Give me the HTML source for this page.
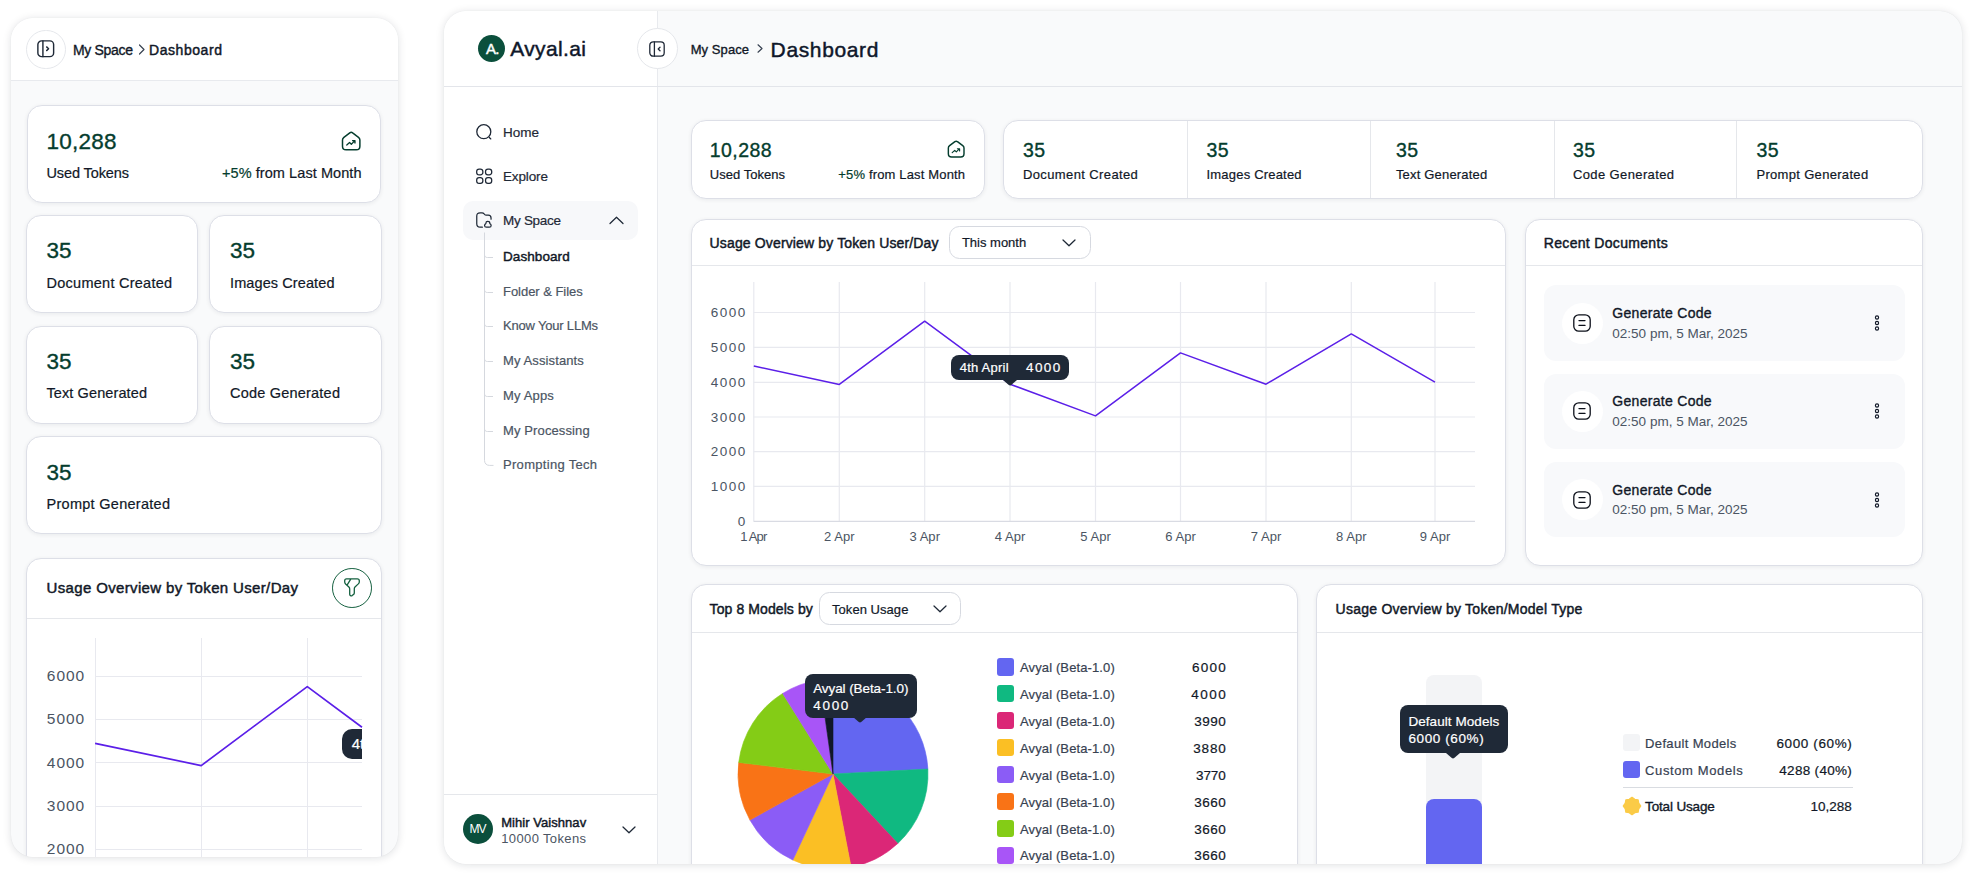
<!DOCTYPE html>
<html lang="en">
<head>
<meta charset="utf-8">
<title>Avyal.ai Dashboard</title>
<style>
*{box-sizing:border-box;margin:0;padding:0}
html,body{width:1972px;height:875px;overflow:hidden;background:#fff}
body{font-family:"Liberation Sans",sans-serif;color:#111827;position:relative}
.abs{position:absolute}
.t{position:absolute;white-space:nowrap;line-height:20px;margin-top:-10px;font-size:14px;color:#111827;-webkit-text-stroke:.2px}
.r{transform:translateX(-100%)}
.c{transform:translateX(-50%)}
.m{font-weight:bold}
.g{color:#053d2e}
.gr{color:#4b5563;-webkit-text-stroke:0}
.nv{color:#1f2937}
.sb{color:#4b5563}
.md{-webkit-text-stroke:.35px}
.sm{-webkit-text-stroke:.45px}
.panel{position:absolute;background:#f9fafb;border-radius:22px;overflow:hidden;box-shadow:0 0 1px rgba(17,24,39,.10),0 1px 9px rgba(17,24,39,.13)}
.card{position:absolute;background:#fff;border:1px solid #dddfe7;border-radius:15px;box-shadow:0 1px 4px rgba(17,24,39,.07)}
.hl{position:absolute;height:1px;background:#e5e7eb}
.vl{position:absolute;width:1px;background:#e5e7eb}
.circ{position:absolute;border-radius:50%}
svg{position:absolute;overflow:visible}
.tip{position:absolute;background:#1f2937;border-radius:8px}
.sq{position:absolute;width:17px;height:17px;border-radius:3px}
.sel{position:absolute;background:#fff;border:1px solid #d6d9e0;border-radius:10.500px}
</style>
</head>
<body>
<div class="panel" style="left:11px;top:18px;width:386.5px;height:839px">
  <div class="abs" style="left:0px;top:0px;width:386.5px;height:62.5px;background:#fff;border-bottom:1px solid #e8eaee"></div>
  <div class="circ" style="left:15.4px;top:11.5px;width:39.2px;height:39.2px;border:1px solid #e5e7eb;background:#fff"></div>
  <svg style="left:26.2px;top:22.4px" width="17.5" height="17.5" viewBox="0 0 16 16" fill="none" stroke="#1f2937" stroke-width="1.300" stroke-linecap="round" stroke-linejoin="round"><rect x="0.800" y="0.800" width="14.400" height="14.400" rx="3.400"/><path d="M5.400 0.800v14.400M8.800 6.300l1.800 1.700-1.800 1.700"/></svg>
  <div class="t md" style="left:62px;top:31.7px;font-size:14px;letter-spacing:-0.32px">My Space</div>
  <svg style="left:127px;top:25.5px" width="8" height="11" viewBox="0 0 8 11" fill="none" stroke="#374151" stroke-width="1.200" stroke-linecap="round" stroke-linejoin="round"><path d="M1.500 1l4.500 4.500L1.500 10"/></svg>
  <div class="t sm" style="left:138px;top:31.7px;font-size:14px;letter-spacing:0.56px">Dashboard</div>
  <div class="card" style="left:15.5px;top:87px;width:354.5px;height:98px"></div>
  <div class="t g md" style="left:35.5px;top:123.5px;font-size:22.5px;letter-spacing:0.23px">10,288</div>
  <div class="t" style="left:35.5px;top:155px;font-size:14.5px;letter-spacing:-0.11px">Used Tokens</div>
  <div class="t r" style="left:350.57px;top:155px;font-size:14.5px;letter-spacing:0.07px"><span class="g">+5%</span> from Last Month</div>
  <svg style="left:330.2px;top:112.5px" width="20" height="20" viewBox="0 0 18 18" fill="none" stroke="#053d2e" stroke-width="1.350" stroke-linecap="round" stroke-linejoin="round"><path d="M7.900 1.700 2.600 5.700C1.800 6.300 1.350 7 1.350 8v5.700c0 2 1.300 3.250 3.250 3.250h9.150c2 0 3.250-1.300 3.250-3.250V8c0-1-.45-1.700-1.250-2.300L10.450 1.700C9.700 1.100 8.700 1.100 7.900 1.700z"/><path stroke-width="1.150" d="M5.200 12.600l2.500-2.300 1.600 1.600 3-3M10.400 8.700h2.200v2.200"/></svg>
  <div class="card" style="left:15px;top:197.3px;width:171.5px;height:98px"></div>
  <div class="t g md" style="left:35.5px;top:233.3px;font-size:22.5px;letter-spacing:-0.03px">35</div>
  <div class="t" style="left:35.5px;top:264.8px;font-size:14.5px;letter-spacing:0.26px">Document Created</div>
  <div class="card" style="left:198px;top:197.3px;width:172.5px;height:98px"></div>
  <div class="t g md" style="left:219px;top:233.3px;font-size:22.5px;letter-spacing:-0.03px">35</div>
  <div class="t" style="left:219px;top:264.8px;font-size:14.5px;letter-spacing:0.1px">Images Created</div>
  <div class="card" style="left:15px;top:307.6px;width:171.5px;height:98px"></div>
  <div class="t g md" style="left:35.5px;top:343.6px;font-size:22.5px;letter-spacing:-0.03px">35</div>
  <div class="t" style="left:35.5px;top:375.1px;font-size:14.5px;letter-spacing:0.1px">Text Generated</div>
  <div class="card" style="left:198px;top:307.6px;width:172.5px;height:98px"></div>
  <div class="t g md" style="left:219px;top:343.6px;font-size:22.5px;letter-spacing:-0.03px">35</div>
  <div class="t" style="left:219px;top:375.1px;font-size:14.5px;letter-spacing:0.21px">Code Generated</div>
  <div class="card" style="left:15px;top:418px;width:355.5px;height:98px"></div>
  <div class="t g md" style="left:35.5px;top:454.8px;font-size:22.5px;letter-spacing:-0.03px">35</div>
  <div class="t" style="left:35.5px;top:485.5px;font-size:14.5px;letter-spacing:0.28px">Prompt Generated</div>
  <div class="card" style="left:15px;top:540px;width:355.5px;height:340px"></div>
  <div class="hl" style="left:16px;top:599.5px;width:353.5px;height:1px"></div>
  <div class="t sm" style="left:35.5px;top:570px;font-size:15px;letter-spacing:0.35px">Usage Overview by Token User/Day</div>
  <div class="circ" style="left:321.3px;top:549.8px;width:39.8px;height:39.8px;border:1.400px solid #14603f"></div>
  <svg style="left:333.2px;top:560.4px" width="16" height="19" viewBox="0 0 16 19" fill="none" stroke="#14603f" stroke-width="1.300" stroke-linecap="round" stroke-linejoin="round"><path d="M2.500.8H13.300c1.300 0 2 .8 2 1.900v1.200c0 .8-.4 1.400-1 2L11 9c-.5.500-.7 1-.7 1.700V15c0 .7-.3 1.200-.9 1.600l-1.300 1c-1 .7-2.400 0-2.400-1.300V11c0-.8-.3-1.500-.8-2L1.600 6C1 5.400.7 4.800.7 4V2.700C.7 1.600 1.400.8 2.500.8zM6.900.9 3.200 6.800"/></svg>
  <svg style="left:0px;top:0px" width="386.5" height="839" viewBox="11 18 386.5 839" ><g stroke="#e8e9ef" stroke-width="1"><path d="M95.5 638V860M201.5 638V860M307.5 638V860"/><path d="M95 676.5H362M95 719.5H362M95 762.5H362M95 806.5H362M95 849.5H362"/></g><path d="M95.100 743.300 201.200 765.600 307.300 686.600 362 727.300" stroke="#5b1fe8" stroke-width="1.700" stroke-linejoin="round" fill="none"/></svg>
  <div class="t gr" style="left:35.8px;top:657.7px;font-size:15.5px;letter-spacing:0.97px">6000</div>
  <div class="t gr" style="left:35.8px;top:700.9px;font-size:15.5px;letter-spacing:0.97px">5000</div>
  <div class="t gr" style="left:35.8px;top:744.5px;font-size:15.5px;letter-spacing:0.97px">4000</div>
  <div class="t gr" style="left:35.8px;top:787.7px;font-size:15.5px;letter-spacing:0.97px">3000</div>
  <div class="t gr" style="left:35.8px;top:830.8px;font-size:15.5px;letter-spacing:0.97px">2000</div>
  <div class="abs" style="left:330.6px;top:710.7px;width:20.400px;height:30.600px;overflow:hidden"><div class="tip" style="left:0;top:0;width:150px;height:30.600px;border-radius:10px"><div class="t" style="left:10.200px;top:15.500px;font-size:15px;color:#fff">4th April &nbsp; 4000</div></div></div>
</div>
<div class="panel" style="left:444px;top:11px;width:1518px;height:853px">
  <div class="abs" style="left:0px;top:0px;width:213px;height:853px;background:#fff"></div>
  <div class="vl" style="left:213px;top:0px;width:1px;height:853px;background:#e8eaee"></div>
  <div class="hl" style="left:0px;top:75px;width:1518px;height:1px;background:#e3e5ea"></div>
  <div class="hl" style="left:0px;top:783px;width:213px;height:1px"></div>
  <div class="circ" style="left:33.7px;top:23.8px;width:27.2px;height:27.2px;background:#0b4f3c"></div>
  <div class="t sm" style="left:42px;top:37.6px;font-size:15px;letter-spacing:-0.79px;color:#fff">A.</div>
  <div class="t sm" style="left:66.2px;top:37.5px;font-size:21px;letter-spacing:0.38px;color:#0f172a">Avyal.ai</div>
  <svg style="left:31.2px;top:112px" width="19" height="19" viewBox="0 0 19 19" fill="none" stroke="#1f2937" stroke-width="1.300" stroke-linecap="round" stroke-linejoin="round"><circle cx="8.800" cy="8.700" r="7"/><path d="M14.300 14.500l1.500 1.400"/></svg>
  <div class="t nv" style="left:59px;top:121.5px;font-size:13.5px;letter-spacing:-0.01px">Home</div>
  <svg style="left:32.2px;top:156.7px" width="16.4" height="16.4" viewBox="0 0 16.500 15.800" fill="none" stroke="#1f2937" stroke-width="1.300"><rect x=".7" y=".7" width="6.200" height="5.800" rx="2.400"/><rect x="9.600" y=".7" width="6.200" height="5.800" rx="2.400"/><rect x=".7" y="9.300" width="6.200" height="5.800" rx="2.400"/><rect x="9.600" y="9.300" width="6.200" height="5.800" rx="2.400"/></svg>
  <div class="t nv" style="left:59px;top:166px;font-size:13.5px;letter-spacing:-0.13px">Explore</div>
  <div class="abs" style="left:18.7px;top:190px;width:175.6px;height:38.8px;border-radius:10px;background:#f7f8fa"></div>
  <svg style="left:32px;top:200.6px" width="16.2" height="16.2" viewBox="0 0 17 17" fill="none" stroke="#1f2937" stroke-width="1.300" stroke-linecap="round" stroke-linejoin="round"><path d="M15.800 7.500V6.300c0-2-.9-2.900-2.900-2.900h-2.200c-.9 0-1.200-.2-1.700-.8l-.7-.9C7.800 1 7.400.8 6.400.8H4.300C1.900.8.8 1.900.8 4.300v8.100c0 2.400 1.100 3.600 3.500 3.600h2.400"/><path d="M12.300 9.800c-1.100 0-1.900.8-1.900 1.900v.5c-.9.300-1.400 1-1.400 1.900 0 1.100.8 1.900 2 1.900h3c1.100 0 1.900-.8 1.900-1.900 0-.9-.5-1.600-1.400-1.900v-.5c0-1.100-.9-1.900-2.200-1.900z"/></svg>
  <div class="t nv" style="left:59px;top:210.3px;font-size:13.5px;letter-spacing:-0.29px">My Space</div>
  <svg style="left:165px;top:204.5px" width="15" height="9" viewBox="0 0 15 9" fill="none" stroke="#1f2937" stroke-width="1.250" stroke-linecap="round" stroke-linejoin="round"><path d="M1 7.500 7.500 1.200 14 7.500"/></svg>
  <svg style="left:0px;top:0px" width="213" height="500" viewBox="444 11 213 500" fill="none" stroke="#d5d8de" stroke-width="1"><path d="M484.500 232.500V460.4c0 3 2 5 5 5h4M484.500 254.5c0 2 1 3 3 3h5.500M484.500 289.5c0 2 1 3 3 3h5.500M484.500 323.5c0 2 1 3 3 3h5.500M484.500 358.5c0 2 1 3 3 3h5.500M484.500 393.5c0 2 1 3 3 3h5.500M484.500 428.5c0 2 1 3 3 3h5.500"/></svg>
  <div class="t sm" style="left:59px;top:245.8px;font-size:13.5px;letter-spacing:0.08px">Dashboard</div>
  <div class="t sb" style="left:59px;top:280.5px;font-size:13px;letter-spacing:-0.04px">Folder &amp; Files</div>
  <div class="t sb" style="left:59px;top:315.4px;font-size:13px;letter-spacing:-0.19px">Know Your LLMs</div>
  <div class="t sb" style="left:59px;top:350.1px;font-size:13px;letter-spacing:0.11px">My Assistants</div>
  <div class="t sb" style="left:59px;top:384.9px;font-size:13px;letter-spacing:0.16px">My Apps</div>
  <div class="t sb" style="left:59px;top:419.6px;font-size:13px;letter-spacing:0.12px">My Processing</div>
  <div class="t sb" style="left:59px;top:454.4px;font-size:13px;letter-spacing:0.3px">Prompting Tech</div>
  <div class="circ" style="left:19px;top:803.4px;width:30px;height:30px;background:#0b4f3c"></div>
  <div class="t c" style="left:33.5px;top:818.3px;font-size:12px;letter-spacing:-1px;color:#fff;-webkit-text-stroke:0">MV</div>
  <div class="t sm" style="left:57.2px;top:811.7px;font-size:13px;letter-spacing:0.05px">Mihir Vaishnav</div>
  <div class="t gr" style="left:57.2px;top:827.7px;font-size:13px;letter-spacing:0.38px">10000 Tokens</div>
  <svg style="left:178px;top:815px" width="14" height="8" viewBox="0 0 14 8" fill="none" stroke="#1f2937" stroke-width="1.250" stroke-linecap="round" stroke-linejoin="round"><path d="M1 1l6 5.800L13 1"/></svg>
  <div class="circ" style="left:193px;top:17.2px;width:40.6px;height:40.6px;border:1px solid #e5e7eb;background:#fff"></div>
  <svg style="left:205.2px;top:30px" width="16" height="16" viewBox="0 0 16 16" fill="none" stroke="#1f2937" stroke-width="1.300" stroke-linecap="round" stroke-linejoin="round"><rect x="0.800" y="0.800" width="14.400" height="14.400" rx="3.400"/><path d="M5.400 0.800v14.400M11 6.300 9.200 8l1.800 1.700"/></svg>
  <div class="t md" style="left:246.7px;top:38.8px;font-size:13px;letter-spacing:0.07px">My Space</div>
  <svg style="left:312.8px;top:33.2px" width="6" height="9" viewBox="0 0 6 9" fill="none" stroke="#374151" stroke-width="1.200" stroke-linecap="round" stroke-linejoin="round"><path d="M1 .8l4 3.700L1 8.200"/></svg>
  <div class="t sm" style="left:326.6px;top:38.8px;font-size:21px;letter-spacing:0.63px;color:#0f172a">Dashboard</div>
  <div class="card" style="left:247px;top:109px;width:293.5px;height:78.5px"></div>
  <div class="t g md" style="left:265.8px;top:139px;font-size:19.5px;letter-spacing:0.43px">10,288</div>
  <div class="t" style="left:265.8px;top:164.4px;font-size:13px;letter-spacing:0.04px">Used Tokens</div>
  <div class="t r" style="left:521.26px;top:164.4px;font-size:13px;letter-spacing:0.16px"><span class="g">+5%</span> from Last Month</div>
  <svg style="left:503px;top:129px" width="18" height="18" viewBox="0 0 18 18" fill="none" stroke="#053d2e" stroke-width="1.450" stroke-linecap="round" stroke-linejoin="round"><path d="M7.900 1.700 2.600 5.700C1.800 6.300 1.350 7 1.350 8v5.700c0 2 1.300 3.250 3.250 3.250h9.150c2 0 3.250-1.300 3.250-3.250V8c0-1-.45-1.700-1.250-2.300L10.450 1.700C9.700 1.100 8.700 1.100 7.900 1.700z"/><path stroke-width="1.150" d="M5.200 12.600l2.500-2.300 1.600 1.600 3-3M10.400 8.700h2.200v2.200"/></svg>
  <div class="card" style="left:559px;top:109px;width:920px;height:78.5px"></div>
  <div class="vl" style="left:742.5px;top:110px;width:1px;height:76.5px"></div>
  <div class="vl" style="left:926.3px;top:110px;width:1px;height:76.5px"></div>
  <div class="vl" style="left:1109.5px;top:110px;width:1px;height:76.5px"></div>
  <div class="vl" style="left:1292.3px;top:110px;width:1px;height:76.5px"></div>
  <div class="t g md" style="left:578.9px;top:139px;font-size:19.5px;letter-spacing:0.5px">35</div>
  <div class="t" style="left:578.9px;top:164.4px;font-size:13px;letter-spacing:0.39px">Document Created</div>
  <div class="t g md" style="left:762.5px;top:139px;font-size:19.5px;letter-spacing:0.5px">35</div>
  <div class="t" style="left:762.5px;top:164.4px;font-size:13px;letter-spacing:0.2px">Images Created</div>
  <div class="t g md" style="left:951.9px;top:139px;font-size:19.5px;letter-spacing:0.5px">35</div>
  <div class="t" style="left:951.9px;top:164.4px;font-size:13px;letter-spacing:0.19px">Text Generated</div>
  <div class="t g md" style="left:1128.9px;top:139px;font-size:19.5px;letter-spacing:0.5px">35</div>
  <div class="t" style="left:1128.9px;top:164.4px;font-size:13px;letter-spacing:0.39px">Code Generated</div>
  <div class="t g md" style="left:1312.4px;top:139px;font-size:19.5px;letter-spacing:0.5px">35</div>
  <div class="t" style="left:1312.4px;top:164.4px;font-size:13px;letter-spacing:0.32px">Prompt Generated</div>
  <div class="card" style="left:247px;top:207.5px;width:814.5px;height:347px"></div>
  <div class="hl" style="left:248px;top:254px;width:812.5px;height:1px"></div>
  <div class="t sm" style="left:265.6px;top:231.7px;font-size:14px;letter-spacing:0.14px">Usage Overview by Token User/Day</div>
  <div class="sel" style="left:504.6px;top:214.7px;width:142px;height:33px"></div>
  <div class="t" style="left:517.9px;top:231.9px;font-size:13px">This month</div>
  <svg style="left:618px;top:227.5px" width="14" height="8" viewBox="0 0 14 8" fill="none" stroke="#1f2937" stroke-width="1.250" stroke-linecap="round" stroke-linejoin="round"><path d="M1 1l6 5.800L13 1"/></svg>
  <svg style="left:0px;top:0px" width="1518" height="853" viewBox="444 11 1518 853" fill="none"><g stroke="#e8e9ef" stroke-width="1.200"><path d="M753.8 282V521M839.3 282V521M924.7 282V521M1010 282V521M1095.5 282V521M1180.5 282V521M1266 282V521M1351.3 282V521M1435 282V521"/><path d="M753.500 312.5H1475M753.500 347.4H1475M753.500 382.3H1475M753.500 417H1475M753.500 451.6H1475M753.500 486.3H1475"/></g><path d="M753.500 521.300H1475" stroke="#d9dbe3" stroke-width="1.200"/><path d="M753.8 366 839.3 384.4 924.7 321.2 1010 384.2 1095.5 415.9 1180.5 352.9 1266 384.2 1351.3 333.9 1435 382.1" stroke="#5b1fe8" stroke-width="1.500" stroke-linejoin="round"/></svg>
  <div class="t gr r" style="left:302.82px;top:302px;font-size:13.5px;letter-spacing:1.52px">6000</div>
  <div class="t gr r" style="left:302.82px;top:336.9px;font-size:13.5px;letter-spacing:1.52px">5000</div>
  <div class="t gr r" style="left:302.82px;top:371.8px;font-size:13.5px;letter-spacing:1.52px">4000</div>
  <div class="t gr r" style="left:302.82px;top:406.5px;font-size:13.5px;letter-spacing:1.52px">3000</div>
  <div class="t gr r" style="left:302.82px;top:441.1px;font-size:13.5px;letter-spacing:1.52px">2000</div>
  <div class="t gr r" style="left:302.82px;top:475.8px;font-size:13.5px;letter-spacing:1.52px">1000</div>
  <div class="t gr r" style="left:301.3px;top:510.7px;font-size:13.5px">0</div>
  <div class="t gr c" style="left:309.38px;top:526px;font-size:13px;letter-spacing:-0.84px">1 Apr</div>
  <div class="t gr c" style="left:395.33px;top:526px;font-size:13px;letter-spacing:0.06px">2 Apr</div>
  <div class="t gr c" style="left:480.73px;top:526px;font-size:13px;letter-spacing:0.06px">3 Apr</div>
  <div class="t gr c" style="left:566.03px;top:526px;font-size:13px;letter-spacing:0.06px">4 Apr</div>
  <div class="t gr c" style="left:651.53px;top:526px;font-size:13px;letter-spacing:0.06px">5 Apr</div>
  <div class="t gr c" style="left:736.53px;top:526px;font-size:13px;letter-spacing:0.06px">6 Apr</div>
  <div class="t gr c" style="left:822.03px;top:526px;font-size:13px;letter-spacing:0.06px">7 Apr</div>
  <div class="t gr c" style="left:907.33px;top:526px;font-size:13px;letter-spacing:0.06px">8 Apr</div>
  <div class="t gr c" style="left:991.03px;top:526px;font-size:13px;letter-spacing:0.06px">9 Apr</div>
  <div class="tip" style="left:507.4px;top:343.6px;width:117.6px;height:25.2px"></div>
  <svg style="left:558.8px;top:368.5px" width="14" height="6" viewBox="0 0 14 6" ><path d="M0 0h14L8.200 5c-.7.600-1.700.600-2.400 0z" fill="#1f2937"/></svg>
  <div class="t" style="left:515.7px;top:356.7px;font-size:13px;letter-spacing:0.24px;color:#fff">4th April</div>
  <div class="t" style="left:582px;top:356.7px;font-size:13.5px;letter-spacing:1.38px;color:#fff">4000</div>
  <div class="card" style="left:1081px;top:207.5px;width:398px;height:347px"></div>
  <div class="hl" style="left:1082px;top:254px;width:396px;height:1px"></div>
  <div class="t sm" style="left:1099.8px;top:231.7px;font-size:14px;letter-spacing:0.32px">Recent Documents</div>
  <div class="abs" style="left:1099.8px;top:274.2px;width:361.4px;height:75.6px;border-radius:12px;background:#f8f9fb"></div>
  <div class="circ" style="left:1117.5px;top:291.5px;width:41px;height:41px;background:#fff"></div>
  <svg style="left:1129px;top:303px" width="18" height="18" viewBox="0 0 18 18" fill="none" stroke="#0b0f19" stroke-width="1.300" stroke-linecap="round"><rect x=".8" y=".8" width="16.400" height="16.400" rx="5"/><path d="M6 6.600h6M6 11.400h6"/></svg>
  <div class="t md" style="left:1168.3px;top:301.8px;font-size:14px;letter-spacing:0.3px">Generate Code</div>
  <div class="t gr" style="left:1168.3px;top:322.6px;font-size:13.5px;letter-spacing:0.01px">02:50 pm, 5 Mar, 2025</div>
  <svg style="left:1429px;top:303px" width="8" height="18" viewBox="0 0 8 18" fill="none" stroke="#111827" stroke-width="1.150"><circle cx="4" cy="3.500" r="1.600"/><circle cx="4" cy="9" r="1.600"/><circle cx="4" cy="14.500" r="1.600"/></svg>
  <div class="abs" style="left:1099.8px;top:362.6px;width:361.4px;height:75.6px;border-radius:12px;background:#f8f9fb"></div>
  <div class="circ" style="left:1117.5px;top:379.9px;width:41px;height:41px;background:#fff"></div>
  <svg style="left:1129px;top:391.4px" width="18" height="18" viewBox="0 0 18 18" fill="none" stroke="#0b0f19" stroke-width="1.300" stroke-linecap="round"><rect x=".8" y=".8" width="16.400" height="16.400" rx="5"/><path d="M6 6.600h6M6 11.400h6"/></svg>
  <div class="t md" style="left:1168.3px;top:390.2px;font-size:14px;letter-spacing:0.3px">Generate Code</div>
  <div class="t gr" style="left:1168.3px;top:411px;font-size:13.5px;letter-spacing:0.01px">02:50 pm, 5 Mar, 2025</div>
  <svg style="left:1429px;top:391.4px" width="8" height="18" viewBox="0 0 8 18" fill="none" stroke="#111827" stroke-width="1.150"><circle cx="4" cy="3.500" r="1.600"/><circle cx="4" cy="9" r="1.600"/><circle cx="4" cy="14.500" r="1.600"/></svg>
  <div class="abs" style="left:1099.8px;top:450.9px;width:361.4px;height:75.6px;border-radius:12px;background:#f8f9fb"></div>
  <div class="circ" style="left:1117.5px;top:468.2px;width:41px;height:41px;background:#fff"></div>
  <svg style="left:1129px;top:479.7px" width="18" height="18" viewBox="0 0 18 18" fill="none" stroke="#0b0f19" stroke-width="1.300" stroke-linecap="round"><rect x=".8" y=".8" width="16.400" height="16.400" rx="5"/><path d="M6 6.600h6M6 11.400h6"/></svg>
  <div class="t md" style="left:1168.3px;top:478.5px;font-size:14px;letter-spacing:0.3px">Generate Code</div>
  <div class="t gr" style="left:1168.3px;top:499.3px;font-size:13.5px;letter-spacing:0.01px">02:50 pm, 5 Mar, 2025</div>
  <svg style="left:1429px;top:479.7px" width="8" height="18" viewBox="0 0 8 18" fill="none" stroke="#111827" stroke-width="1.150"><circle cx="4" cy="3.500" r="1.600"/><circle cx="4" cy="9" r="1.600"/><circle cx="4" cy="14.500" r="1.600"/></svg>
  <div class="card" style="left:247px;top:573px;width:606.5px;height:320px"></div>
  <div class="hl" style="left:248px;top:621.3px;width:604.5px;height:1px"></div>
  <div class="t sm" style="left:265.6px;top:597.7px;font-size:14px;letter-spacing:0.09px">Top 8 Models by</div>
  <div class="sel" style="left:374.8px;top:581.3px;width:142.7px;height:33px"></div>
  <div class="t" style="left:388px;top:598.9px;font-size:13px;letter-spacing:0.05px">Token Usage</div>
  <svg style="left:488.8px;top:594.2px" width="14" height="8" viewBox="0 0 14 8" fill="none" stroke="#1f2937" stroke-width="1.250" stroke-linecap="round" stroke-linejoin="round"><path d="M1 1l6 5.800L13 1"/></svg>
  <svg style="left:0px;top:0px" width="1518" height="853" viewBox="444 11 1518 853" ><path d="M833 774L833 679A95 95 0 0 1 927.87 769.03z" fill="#6366f1" stroke="#6366f1" stroke-width=".6"/><path d="M833 774L927.87 769.03A95 95 0 0 1 897.79 843.48z" fill="#10b981" stroke="#10b981" stroke-width=".6"/><path d="M833 774L897.79 843.48A95 95 0 0 1 851.13 867.25z" fill="#db2777" stroke="#db2777" stroke-width=".6"/><path d="M833 774L851.13 867.25A95 95 0 0 1 792.85 860.1z" fill="#fbbf24" stroke="#fbbf24" stroke-width=".6"/><path d="M833 774L792.85 860.1A95 95 0 0 1 749.91 820.06z" fill="#8b5cf6" stroke="#8b5cf6" stroke-width=".6"/><path d="M833 774L749.91 820.06A95 95 0 0 1 738.71 762.42z" fill="#f97316" stroke="#f97316" stroke-width=".6"/><path d="M833 774L738.71 762.42A95 95 0 0 1 782.66 693.44z" fill="#84cc16" stroke="#84cc16" stroke-width=".6"/><path d="M833 774L782.66 693.44A95 95 0 0 1 819.78 679.92z" fill="#a855f7" stroke="#a855f7" stroke-width=".6"/><path d="M833 774L819.78 679.92A95 95 0 0 1 833 679z" fill="#111827" stroke="#111827" stroke-width=".6"/></svg>
  <div class="tip" style="left:360.8px;top:663px;width:112.5px;height:43.6px"></div>
  <svg style="left:409.3px;top:706.4px" width="14" height="6" viewBox="0 0 14 6" ><path d="M0 0h14L8.200 5c-.7.600-1.700.600-2.400 0z" fill="#1f2937"/></svg>
  <div class="t" style="left:369.2px;top:678px;font-size:13.5px;letter-spacing:-0.09px;color:#fff">Avyal (Beta-1.0)</div>
  <div class="t" style="left:369.2px;top:695px;font-size:13.5px;letter-spacing:1.72px;color:#fff">4000</div>
  <div class="sq" style="left:553px;top:647.2px;width:17.4px;height:17.4px;background:#6366f1"></div>
  <div class="t" style="left:576px;top:657px;font-size:13px;letter-spacing:0.12px;color:#374151">Avyal (Beta-1.0)</div>
  <div class="t r" style="left:782.95px;top:657px;font-size:13.5px;letter-spacing:1.25px">6000</div>
  <div class="sq" style="left:553px;top:674.1px;width:17.4px;height:17.4px;background:#10b981"></div>
  <div class="t" style="left:576px;top:683.9px;font-size:13px;letter-spacing:0.12px;color:#374151">Avyal (Beta-1.0)</div>
  <div class="t r" style="left:783.18px;top:683.9px;font-size:13.5px;letter-spacing:1.48px">4000</div>
  <div class="sq" style="left:553px;top:700.9px;width:17.4px;height:17.4px;background:#db2777"></div>
  <div class="t" style="left:576px;top:710.7px;font-size:13px;letter-spacing:0.12px;color:#374151">Avyal (Beta-1.0)</div>
  <div class="t r" style="left:782.15px;top:710.7px;font-size:13.5px;letter-spacing:0.45px">3990</div>
  <div class="sq" style="left:553px;top:728.1px;width:17.4px;height:17.4px;background:#fbbf24"></div>
  <div class="t" style="left:576px;top:737.9px;font-size:13px;letter-spacing:0.12px;color:#374151">Avyal (Beta-1.0)</div>
  <div class="t r" style="left:782.48px;top:737.9px;font-size:13.5px;letter-spacing:0.78px">3880</div>
  <div class="sq" style="left:553px;top:755px;width:17.4px;height:17.4px;background:#8b5cf6"></div>
  <div class="t" style="left:576px;top:764.8px;font-size:13px;letter-spacing:0.12px;color:#374151">Avyal (Beta-1.0)</div>
  <div class="t r" style="left:781.55px;top:764.8px;font-size:13.5px;letter-spacing:-0.15px">3770</div>
  <div class="sq" style="left:553px;top:781.8px;width:17.4px;height:17.4px;background:#f97316"></div>
  <div class="t" style="left:576px;top:791.6px;font-size:13px;letter-spacing:0.12px;color:#374151">Avyal (Beta-1.0)</div>
  <div class="t r" style="left:782.15px;top:791.6px;font-size:13.5px;letter-spacing:0.45px">3660</div>
  <div class="sq" style="left:553px;top:808.7px;width:17.4px;height:17.4px;background:#84cc16"></div>
  <div class="t" style="left:576px;top:818.5px;font-size:13px;letter-spacing:0.12px;color:#374151">Avyal (Beta-1.0)</div>
  <div class="t r" style="left:782.15px;top:818.5px;font-size:13.5px;letter-spacing:0.45px">3660</div>
  <div class="sq" style="left:553px;top:835.5px;width:17.4px;height:17.4px;background:#a855f7"></div>
  <div class="t" style="left:576px;top:845.3px;font-size:13px;letter-spacing:0.12px;color:#374151">Avyal (Beta-1.0)</div>
  <div class="t r" style="left:782.15px;top:845.3px;font-size:13.5px;letter-spacing:0.45px">3660</div>
  <div class="card" style="left:872px;top:573px;width:607px;height:320px"></div>
  <div class="hl" style="left:873px;top:621.3px;width:605px;height:1px"></div>
  <div class="t sm" style="left:891.6px;top:597.7px;font-size:14px;letter-spacing:0.25px">Usage Overview by Token/Model Type</div>
  <div class="abs" style="left:981.8px;top:663.6px;width:56.5px;height:200px;border-radius:8px;background:#f3f4f6"></div>
  <div class="abs" style="left:981.8px;top:788px;width:56.5px;height:100px;border-radius:8px;background:#6366f1"></div>
  <div class="tip" style="left:956.4px;top:693.5px;width:107.3px;height:48.8px"></div>
  <svg style="left:1001.7px;top:742.1px" width="14" height="6" viewBox="0 0 14 6" ><path d="M0 0h14L8.200 5c-.7.600-1.700.600-2.400 0z" fill="#1f2937"/></svg>
  <div class="t" style="left:964.4px;top:710.6px;font-size:13.5px;letter-spacing:0.07px;color:#fff">Default Models</div>
  <div class="t" style="left:964.4px;top:727.7px;font-size:13.5px;letter-spacing:0.61px;color:#fff">6000 (60%)</div>
  <div class="sq" style="left:1179.1px;top:723px;width:17.4px;height:17.4px;background:#f3f4f6"></div>
  <div class="t" style="left:1201.1px;top:733px;font-size:13px;letter-spacing:0.35px;color:#374151">Default Models</div>
  <div class="t r" style="left:1408.41px;top:733px;font-size:13.5px;letter-spacing:0.61px">6000 (60%)</div>
  <div class="sq" style="left:1179.1px;top:749.8px;width:17.4px;height:17.4px;background:#6366f1"></div>
  <div class="t" style="left:1201.1px;top:759.8px;font-size:13px;letter-spacing:0.61px;color:#374151">Custom Models</div>
  <div class="t r" style="left:1408.1px;top:759.8px;font-size:13.5px;letter-spacing:0.3px">4288 (40%)</div>
  <div class="hl" style="left:1179px;top:776px;width:230px;height:1px;background:#d9dce1"></div>
  <svg style="left:1178.8px;top:786.3px" width="18" height="18" viewBox="0 0 18 18" ><path d="M9.00 0.40L11.76 2.35L15.08 2.92L15.65 6.24L17.60 9.00L15.65 11.76L15.08 15.08L11.76 15.65L9.00 17.60L6.24 15.65L2.92 15.08L2.35 11.76L0.40 9.00L2.35 6.24L2.92 2.92L6.24 2.35z" fill="#fbcb47" stroke="#fbcb47" stroke-width="1.400" stroke-linejoin="round"/></svg>
  <div class="t md" style="left:1201.1px;top:796px;font-size:13.5px;letter-spacing:-0.16px">Total Usage</div>
  <div class="t r" style="left:1407.78px;top:796px;font-size:13.5px;letter-spacing:-0.02px">10,288</div>
</div>
</body>
</html>
